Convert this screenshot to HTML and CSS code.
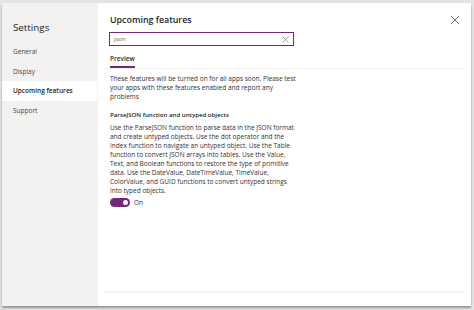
FILE: index.html
```html
<!DOCTYPE html>
<html>
<head>
<meta charset="utf-8">
<link rel="stylesheet" href="styles.css">
</head>
<body>
<div class="dialog">
  <aside class="sidebar">
    <div class="side-title">Settings</div>
    <nav class="nav">
      <div class="nav-item">General</div>
      <div class="nav-item">Display</div>
      <div class="nav-item active">Upcoming features</div>
      <div class="nav-item">Support</div>
    </nav>
  </aside>
  <main class="main">
    <div class="head">
      <h1 class="title">Upcoming features</h1>
      <button class="close" aria-label="Close">
        <svg width="10" height="10" viewBox="0 0 10 10"><path d="M1 1L9 9M9 1L1 9" stroke="#605e5c" stroke-width="0.9" fill="none"/></svg>
      </button>
    </div>
    <div class="search">
      <span class="search-text">json</span>
      <svg class="search-x" width="7" height="7" viewBox="0 0 7 7"><path d="M0.5 0.5L6.5 6.5M6.5 0.5L0.5 6.5" stroke="#8a8886" stroke-width="0.8" fill="none"/></svg>
    </div>
    <div class="tabs">
      <div class="tab">Preview</div>
    </div>
    <div class="content">
      <p class="intro">These features will be turned on for all apps soon. Please test your apps with these features enabled and report any problems</p>
      <h2 class="feat-title">ParseJSON function and untyped objects</h2>
      <p class="feat-desc">Use the ParseJSON function to parse data in the JSON format and create untyped objects. Use the dot operator and the Index function to navigate an untyped object. Use the Table function to convert JSON arrays into tables. Use the Value, Text, and Boolean functions to restore the type of primitive data. Use the DateValue, DateTimeValue, TimeValue, ColorValue, and GUID functions to convert untyped strings into typed objects.</p>
      <div class="toggle-row">
        <span class="toggle"><span class="knob"></span></span>
        <span class="toggle-label">On</span>
      </div>
    </div>
    <div class="footer-line"></div>
  </main>
</div>
</body>
</html>
```

FILE: styles.css
```css
* { box-sizing: border-box; }
html, body { margin: 0; padding: 0; }
body {
  width: 474px;
  height: 310px;
  background: #e4e4e4;
  font-family: "Open Sans", "Noto Sans", sans-serif;
  color: #323130;
  padding: 3px 3px 4px 2px;
  overflow: hidden;
}
.dialog {
  display: flex;
  width: 469px;
  height: 303px;
  background: #fff;
  box-shadow: 0 2px 2px rgba(0,0,0,0.35);
}
.sidebar {
  width: 96px;
  background: #f3f2f1;
  padding-top: 17px;
}
.side-title {
  font-size: 9.8px;
  line-height: 16px;
  padding-left: 11px;
  color: #201f1e;
  margin-bottom: 6px;
}
.nav { display: flex; flex-direction: column; }
.nav-item {
  height: 19.5px;
  line-height: 19.5px;
  font-size: 6.5px;
  padding-left: 11px;
  color: #484644;
  width: 95px;
}
.nav-item.active {
  background: #fff;
  font-weight: 600;
  color: #201f1e;
}
.main {
  flex: 1;
  display: flex;
  flex-direction: column;
  padding: 0 7px 0 6px;
}
.head {
  display: flex;
  justify-content: space-between;
  align-items: center;
  height: 29px;
  padding: 4px 0 0 6px;
}
.title {
  margin: 0;
  font-size: 8.9px;
  font-weight: 600;
  color: #201f1e;
}
.close {
  border: 0;
  background: none;
  padding: 0;
  margin-right: 4px;
  display: flex;
}
.search {
  margin-left: 5px;
  width: 185px;
  height: 14px;
  border: 1.5px solid #742774;
  display: flex;
  align-items: center;
  justify-content: space-between;
  padding: 0 4px 0 4px;
}
.search-text { font-size: 6px; color: #605e5c; }
.tabs {
  margin-top: 7px;
  border-bottom: 1px solid #f3f2f1;
  padding-left: 6px;
  display: flex;
}
.tab {
  font-size: 6.5px;
  font-weight: 600;
  line-height: 12px;
  padding-bottom: 1px;
  border-bottom: 2px solid #742774;
}
.content {
  padding: 0 0 0 6px;
  flex: 1;
}
.intro, .feat-desc {
  margin: 0;
  font-size: 6.5px;
  line-height: 9px;
  width: 190px;
}
.intro { margin-top: 5px; }
.feat-title {
  margin: 9px 0 4px;
  font-size: 6.1px;
  line-height: 9px;
  font-weight: 600;
  color: #201f1e;
}
.toggle-row {
  display: flex;
  align-items: center;
  gap: 4px;
  margin-top: 3px;
}
.toggle {
  width: 20px;
  height: 9px;
  border-radius: 5px;
  background: #742774;
  display: flex;
  align-items: center;
  justify-content: flex-end;
  padding-right: 2px;
}
.knob {
  width: 5px;
  height: 5px;
  border-radius: 50%;
  background: #fff;
}
.toggle-label { font-size: 6.5px; }
.footer-line {
  height: 2px;
  background: #f6f6f6;
  margin: 0 0 13px 0;
}
```
